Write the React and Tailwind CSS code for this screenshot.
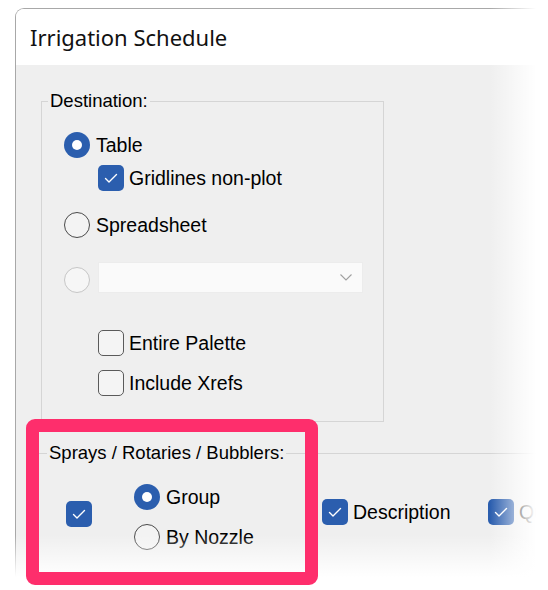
import React from "react";

const Check = () => (
  <svg width="26" height="26" viewBox="0 0 26 26" fill="none">
    <path d="M7.5 13.5 L11 17 L18.5 9.5" stroke="#fff" strokeWidth="1.4" strokeLinecap="round" strokeLinejoin="round" />
  </svg>
);

function CheckBox({ checked }) {
  if (checked) {
    return (
      <div className="w-[26px] h-[26px] shrink-0 rounded-[5px] bg-[#2b5eae]">
        <Check />
      </div>
    );
  }
  return <div className="w-[26px] h-[26px] shrink-0 rounded-[5px] border-[1.5px] border-[#5a5a5a] bg-[#f4f4f4]" />;
}

function Radio({ checked, disabled }) {
  if (checked) {
    return (
      <div className="w-[26px] h-[26px] shrink-0 rounded-full bg-[#2b5eae] flex items-center justify-center">
        <div className="w-[10px] h-[10px] rounded-full bg-white" />
      </div>
    );
  }
  if (disabled) {
    return <div className="w-[26px] h-[26px] shrink-0 rounded-full border-[1.5px] border-[#c6c6c6] bg-[#f6f6f6]" />;
  }
  return <div className="w-[26px] h-[26px] shrink-0 rounded-full border-[1.5px] border-[#4a4a4a] bg-[#f3f3f3]" />;
}

function Option({ control, label, gap = "gap-[6px]" }) {
  return (
    <div className={`flex items-center h-[26px] ${gap}`}>
      {control}
      <span className="text-[19.5px] leading-[26px] text-black whitespace-nowrap">{label}</span>
    </div>
  );
}

export default function App() {
  return (
    <div className="relative w-[548px] h-[590px] overflow-hidden bg-white pt-[8px] pl-[15px] font-['Liberation_Sans',Arial,sans-serif]">
      {/* Dialog */}
      <div className="w-[560px] h-[620px] border-l border-t border-[#a8a8a8] rounded-tl-[9px] overflow-hidden flex flex-col">
        <div className="h-[56px] shrink-0 bg-white pl-[14px] flex items-center">
          <span className="font-['Noto_Sans',sans-serif] text-[22px] leading-[28px] text-[#111]">Irrigation Schedule</span>
        </div>

        <div className="flex-1 bg-[#efefef] pl-[25px] pt-[36px]">
          {/* Destination */}
          <div className="w-[343px] h-[321px] border border-[#d5d5d5]">
            <div className="w-fit -mt-[12px] ml-[6px] px-[2px] bg-[#efefef] text-[18.5px] leading-[22px] text-black">
              Destination:
            </div>
            <div className="mt-[20px] ml-[22px]">
              <Option control={<Radio checked />} label="Table" />
            </div>
            <div className="mt-[7px] ml-[56px]">
              <Option control={<CheckBox checked />} label="Gridlines non-plot" gap="gap-[5px]" />
            </div>
            <div className="mt-[21px] ml-[22px]">
              <Option control={<Radio />} label="Spreadsheet" />
            </div>
            <div className="mt-[24px] ml-[22px] flex items-end gap-[8px]">
              <Radio disabled />
              <div className="w-[265px] h-[31px] bg-[#fafafa] border border-[#ececec] flex items-center justify-end pr-[10px]">
                <svg width="12" height="7" viewBox="0 0 12 7" fill="none">
                  <path d="M0.5 0.5 L6 6 L11.5 0.5" stroke="#a0a0a0" strokeWidth="1.1" />
                </svg>
              </div>
            </div>
            <div className="mt-[37px] ml-[56px]">
              <Option control={<CheckBox />} label="Entire Palette" gap="gap-[5px]" />
            </div>
            <div className="mt-[14px] ml-[56px]">
              <Option control={<CheckBox />} label="Include Xrefs" gap="gap-[5px]" />
            </div>
          </div>

          {/* Sprays / Rotaries / Bubblers */}
          <div className="mt-[31px] -ml-[8px] w-[600px] h-[200px] border-t border-l border-[#d5d5d5]">
            <div className="w-fit -mt-[12px] ml-[13px] px-[2px] bg-[#efefef] text-[18.5px] leading-[22px] text-black">
              Sprays / Rotaries / Bubblers:
            </div>
            <div className="mt-[20px] flex items-start">
              <div className="ml-[32px] mt-[17px]">
                <CheckBox checked />
              </div>
              <div className="ml-[42px] w-[188px] flex flex-col gap-[14px]">
                <Option control={<Radio checked />} label="Group" />
                <Option control={<Radio />} label="By Nozzle" />
              </div>
              <div className="mt-[15px] w-[166px]">
                <Option control={<CheckBox checked />} label="Description" gap="gap-[5px]" />
              </div>
              <div className="mt-[15px]">
                <Option control={<CheckBox checked />} label="Quantity" gap="gap-[5px]" />
              </div>
            </div>
          </div>
        </div>
      </div>

      {/* fades at the edges of the cropped screenshot */}
      <div className="absolute top-0 left-[490px] w-[58px] h-full z-10 bg-[linear-gradient(to_right,rgba(255,255,255,0)_0px,#ffffff_46px)]" />
      <div className="absolute left-0 top-[535px] w-full h-[55px] z-10 bg-[linear-gradient(to_bottom,rgba(255,255,255,0)_0px,#ffffff_42px)]" />

      {/* highlight */}
      <div className="absolute left-[26px] top-[419px] w-[292px] h-[166px] z-20 border-[13px] border-[#fe2e6c] rounded-[9px]" />
    </div>
  );
}
